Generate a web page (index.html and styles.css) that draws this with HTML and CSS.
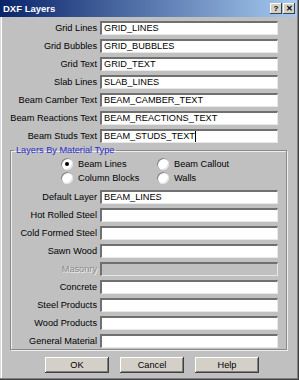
FILE: index.html
```html
<!DOCTYPE html>
<html>
    <head>
        <title>DXF Layers</title>
        <link rel="stylesheet" href="styles.css">
    </head>
    <body>
        <div class="dialog">
            <div class="titlebar">
                <span class="title">DXF Layers</span>
                <span class="tbtns"><span class="tbtn">?</span><span class="tbtn">✕</span></span>
            </div>

            <div class="rows">
                <div class="row"><label>Grid Lines</label><div class="field">GRID_LINES</div></div>
                <div class="row"><label>Grid Bubbles</label><div class="field">GRID_BUBBLES</div></div>
                <div class="row"><label>Grid Text</label><div class="field">GRID_TEXT</div></div>
                <div class="row"><label>Slab Lines</label><div class="field">SLAB_LINES</div></div>
                <div class="row"><label>Beam Camber Text</label><div class="field">BEAM_CAMBER_TEXT</div></div>
                <div class="row"><label>Beam Reactions Text</label><div class="field">BEAM_REACTIONS_TEXT</div></div>
                <div class="row"><label>Beam Studs Text</label><div class="field">BEAM_STUDS_TEXT<span class="caret"></span></div></div>
            </div>

            <fieldset class="group">
                <legend>Layers By Material Type</legend>
                <div class="radios">
                    <div class="radio"><span class="dot checked"></span>Beam Lines</div>
                    <div class="radio"><span class="dot"></span>Beam Callout</div>
                    <div class="radio"><span class="dot"></span>Column Blocks</div>
                    <div class="radio"><span class="dot"></span>Walls</div>
                </div>
                <div class="rows inner">
                    <div class="row"><label>Default Layer</label><div class="field">BEAM_LINES</div></div>
                    <div class="row"><label>Hot Rolled Steel</label><div class="field"></div></div>
                    <div class="row"><label>Cold Formed Steel</label><div class="field"></div></div>
                    <div class="row"><label>Sawn Wood</label><div class="field"></div></div>
                    <div class="row disabled"><label>Masonry</label><div class="field"></div></div>
                    <div class="row"><label>Concrete</label><div class="field"></div></div>
                    <div class="row"><label>Steel Products</label><div class="field"></div></div>
                    <div class="row"><label>Wood Products</label><div class="field"></div></div>
                    <div class="row"><label>General Material</label><div class="field"></div></div>
                </div>
            </fieldset>

            <div class="buttons">
                <div class="button">OK</div>
                <div class="button">Cancel</div>
                <div class="button">Help</div>
            </div>
        </div>
    </body>
</html>
```

FILE: styles.css
```css
body{
    margin: 0;
    font-family: "Liberation Sans", Arial, sans-serif;
    font-size: 9.2px;
    line-height: 13px;
    color: #000;
    background: #fff;
}

.dialog{
    width: 299px;
    height: 380px;
    box-sizing: border-box;
    background: #c0c0c0;
    box-shadow: inset -1px -1px 0 #404040, inset -2px -2px 0 #808080, inset 1px 0 0 #dcdcdc, inset 2px 0 0 #fff;
}

.titlebar{
    height: 17px;
    width: 297px;
    display: flex;
    align-items: center;
    justify-content: space-between;
    background: linear-gradient(to right, #0a246a, #a6caf0);
}

.title{
    color: #fff;
    font-weight: bold;
    font-size: 9.5px;
    padding-left: 3px;
}

.tbtns{
    display: flex;
    gap: 1px;
    padding-right: 2px;
}

.tbtn{
    width: 12px;
    height: 11px;
    background: #d4d0c8;
    box-shadow: inset -1px -1px 0 #404040, inset 1px 1px 0 #fff;
    font-size: 8px;
    font-weight: bold;
    line-height: 11px;
    text-align: center;
}

.rows{
    display: flex;
    flex-direction: column;
    gap: 4px;
    padding-top: 4px;
}

.row{
    display: flex;
    align-items: center;
    gap: 3px;
    height: 14px;
}

.row label{
    width: 97px;
    text-align: right;
    white-space: nowrap;
}

.field{
    width: 178px;
    height: 14px;
    box-sizing: border-box;
    background: #fff;
    border-top: 2px solid #707070;
    border-left: 2px solid #707070;
    border-bottom: 1px solid #e8e8e8;
    border-right: 1px solid #e8e8e8;
    padding-left: 2px;
    line-height: 11px;
    display: flex;
    align-items: center;
}

.caret{
    width: 1px;
    height: 11px;
    background: #000;
}

.disabled label{
    color: #8a8a8a;
    text-shadow: 1px 1px 0 #f0f0f0;
}

.disabled .field{
    background: #c0c0c0;
}

.group{
    width: 277px;
    box-sizing: border-box;
    margin: 1px 0 7px 10px;
    padding: 0 0 1px 0;
    border: 1px solid #8a8a8a;
    box-shadow: 1px 1px 0 #eee, inset 1px 1px 0 #eee;
}

.group legend{
    color: #2a2acc;
    padding: 0 2px;
    margin-left: 3px;
    line-height: 13px;
}

.radios{
    display: grid;
    grid-template-columns: 96px 100px;
    padding-left: 50px;
}

.radio{
    display: flex;
    align-items: center;
    gap: 5px;
    height: 14px;
}

.dot{
    width: 12px;
    height: 12px;
    border-radius: 50%;
    background: #fff;
    box-shadow: inset 1px 1px 0 #808080, inset -1px -1px 0 #e0e0e0;
    display: flex;
    align-items: center;
    justify-content: center;
}

.dot.checked::after{
    content: "";
    width: 4px;
    height: 4px;
    border-radius: 50%;
    background: #000;
}

.inner{
    padding-top: 5px;
}

.inner .row label{
    width: 86px;
}

.buttons{
    display: flex;
    gap: 11px;
    padding-left: 45px;
}

.button{
    width: 64px;
    height: 16px;
    box-sizing: border-box;
    background: #d4d0c8;
    box-shadow: inset -1px -1px 0 #404040, inset 1px 1px 0 #fff, inset -2px -2px 0 #808080;
    text-align: center;
    line-height: 16px;
}
```
